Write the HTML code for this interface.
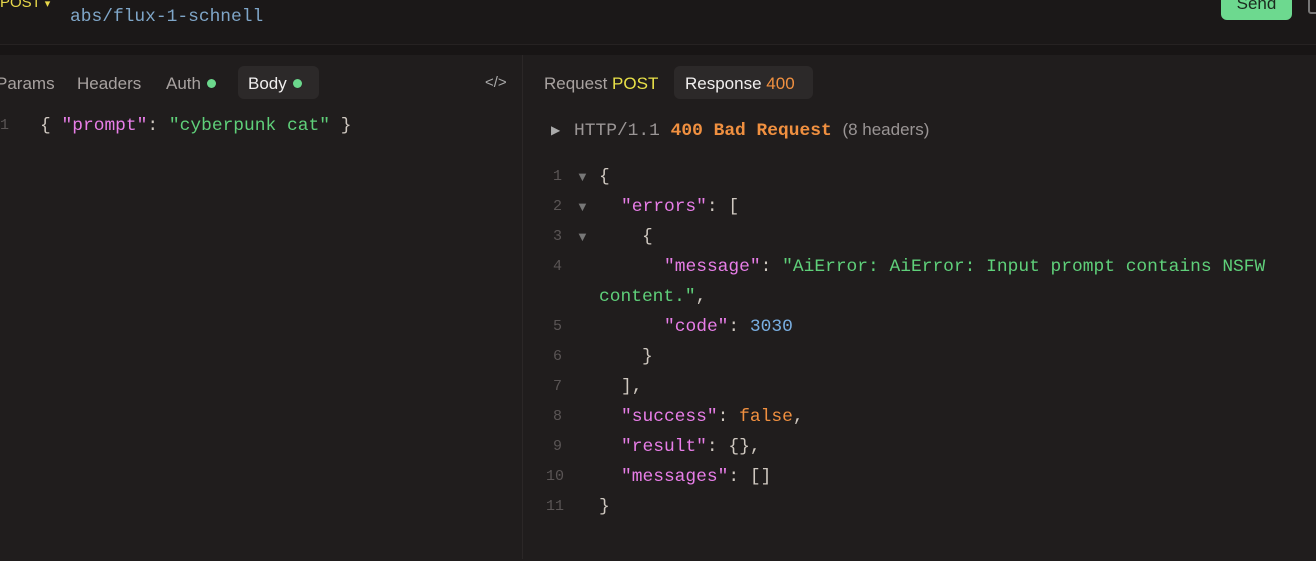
<!DOCTYPE html>
<html><head><style>
body{margin:0;width:1316px;height:559px;background:#201d1d;overflow:hidden;font-family:"Liberation Sans",sans-serif;position:relative}
.mono{font-family:"Liberation Mono",monospace;font-size:17.9px}
.abs{position:absolute;white-space:pre}
.top{position:absolute;left:0;top:0;width:1316px;height:44px;background:#1b1818;border-bottom:1px solid #262222}
.gap{position:absolute;left:0;top:45px;width:1316px;height:10px;background:#181515}
.div{position:absolute;left:522px;top:55px;width:1px;height:504px;background:#2b2727}
.tab{position:absolute;font-size:17px;color:#a8a2a0;top:74px}
.k{color:#e87ee8}.s{color:#5fd07a}.n{color:#79aee0}.p{color:#cfc8c0}.b{color:#f09040}.ln{color:#5a5555}
.dot{display:inline-block;width:9px;height:9px;border-radius:50%;background:#6bd88c;margin-left:6px;vertical-align:1px}
.r{position:absolute;white-space:pre;font-family:"Liberation Mono",monospace;font-size:17.9px;line-height:22px}
.num{position:absolute;font-family:"Liberation Mono",monospace;font-size:15px;color:#5a5555;line-height:22px}
.tri{position:absolute;left:576px;color:#777;font-size:13px;line-height:22px}
#c{position:absolute;left:0;top:2px;width:1316px;height:559px}
</style></head><body>
<div class="top"></div><div class="gap"></div><div class="div"></div>
<div class="abs" style="left:0;top:-6px;font-size:15px;color:#e8d84a">POST <span style="font-size:11px">▾</span></div>
<div class="abs mono" style="left:70px;top:7px;color:#7fa6c8">abs/flux-1-schnell</div>
<div class="abs" style="left:1221px;top:-8px;width:71px;height:28px;background:#6dd98f;border-radius:6px;color:#1b2a1e;font-size:17px;text-align:center;line-height:24px">Send</div>
<div class="abs" style="left:1308px;top:-4px;width:10px;height:14px;border:2px solid #777;border-radius:3px"></div>

<div class="tab" style="left:-4px">Params</div>
<div class="tab" style="left:77px">Headers</div>
<div class="tab" style="left:166px">Auth<span class="dot"></span></div>
<div class="abs" style="left:238px;top:66px;width:81px;height:33px;background:#2c2929;border-radius:6px"></div>
<div class="tab" style="left:248px;color:#f0eeee">Body<span class="dot"></span></div>
<div class="abs" style="left:485px;top:74px;color:#aaa;font-size:15px">&lt;/&gt;</div>
<div class="num" style="left:0;top:115px">1</div>
<div class="r" style="left:40px;top:115px"><span class="p">{</span> <span class="k">"prompt"</span><span class="p">:</span> <span class="s">"cyberpunk cat"</span> <span class="p">}</span></div>

<div class="tab" style="left:544px">Request <span style="color:#e8e048">POST</span></div>
<div class="abs" style="left:674px;top:66px;width:139px;height:33px;background:#2c2929;border-radius:6px"></div>
<div class="tab" style="left:685px;color:#f0eeee">Response <span class="b">400</span></div>
<div class="abs" style="left:551px;top:123px;color:#aaa;font-size:12px">▶</div>
<div class="r" style="left:574px;top:119px;color:#9a9595">HTTP/1.1 <b class="b">400 Bad Request</b> <span style="font-family:'Liberation Sans';font-size:17px">(8 headers)</span></div>

<div id="c">
<div class="num" style="left:553px;top:164px">1</div><div class="tri" style="top:164px">▼</div>
<div class="r" style="left:599px;top:164px"><span class="p">{</span></div>
<div class="num" style="left:553px;top:194px">2</div><div class="tri" style="top:194px">▼</div>
<div class="r" style="left:621px;top:194px"><span class="k">"errors"</span><span class="p">: [</span></div>
<div class="num" style="left:553px;top:224px">3</div><div class="tri" style="top:224px">▼</div>
<div class="r" style="left:642px;top:224px"><span class="p">{</span></div>
<div class="num" style="left:553px;top:254px">4</div>
<div class="r" style="left:664px;top:254px"><span class="k">"message"</span><span class="p">:</span> <span class="s">"AiError: AiError: Input prompt contains NSFW</span></div>
<div class="r" style="left:599px;top:284px"><span class="s">content."</span><span class="p">,</span></div>
<div class="num" style="left:553px;top:314px">5</div>
<div class="r" style="left:664px;top:314px"><span class="k">"code"</span><span class="p">:</span> <span class="n">3030</span></div>
<div class="num" style="left:553px;top:344px">6</div>
<div class="r" style="left:642px;top:344px"><span class="p">}</span></div>
<div class="num" style="left:553px;top:374px">7</div>
<div class="r" style="left:621px;top:374px"><span class="p">],</span></div>
<div class="num" style="left:553px;top:404px">8</div>
<div class="r" style="left:621px;top:404px"><span class="k">"success"</span><span class="p">:</span> <span class="b">false</span><span class="p">,</span></div>
<div class="num" style="left:553px;top:434px">9</div>
<div class="r" style="left:621px;top:434px"><span class="k">"result"</span><span class="p">: {},</span></div>
<div class="num" style="left:546px;top:464px">10</div>
<div class="r" style="left:621px;top:464px"><span class="k">"messages"</span><span class="p">: []</span></div>
<div class="num" style="left:546px;top:494px">11</div>
<div class="r" style="left:599px;top:494px"><span class="p">}</span></div>
</div>
</body></html>
